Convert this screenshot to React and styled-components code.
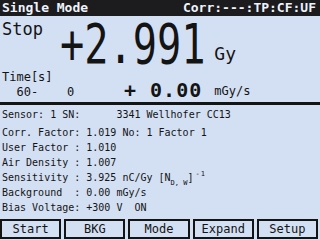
import styled, { createGlobalStyle } from "styled-components";

const GlobalStyle = createGlobalStyle`
  html, body {
    margin: 0;
    padding: 0;
    background: #d3dff2;
  }
  #root {
    width: 320px;
    height: 240px;
    overflow: hidden;
  }
`;

const Screen = styled.div`
  width: 320px;
  height: 240px;
  display: flex;
  flex-direction: column;
  background: #d3dff2;
  color: #141414;
  font-family: "DejaVu Sans Mono", "Liberation Mono", monospace;
`;

const TitleBar = styled.div`
  height: 16px;
  display: flex;
  justify-content: space-between;
  padding: 0 4px 0 2px;
  background: #1c1c1e;
  color: #eef2fa;
  font-size: 13px;
  font-weight: bold;
  line-height: 16px;
  white-space: pre;
`;

const Reading = styled.div`
  height: 86px;
  display: flex;
  flex-direction: column;
  border-bottom: 3px solid #141414;
`;

const DoseRow = styled.div`
  height: 52px;
  display: flex;
  align-items: flex-start;
`;

const Status = styled.div`
  width: 60px;
  padding: 5px 0 0 2px;
  box-sizing: border-box;
  font-size: 17px;
  line-height: 1;
`;

const BigValue = styled.span`
  display: inline-block;
  font-size: 56px;
  line-height: 1;
  transform: scaleX(0.72);
  transform-origin: left top;
  margin-right: -57px;
`;

const Unit = styled.span`
  font-size: ${(p) => p.$size || 12}px;
  line-height: 1;
  margin-top: ${(p) => p.$top || 0}px;
  margin-left: ${(p) => p.$left || 0}px;
`;

const RateRow = styled.div`
  display: flex;
  align-items: flex-start;
`;

const TimeBlock = styled.div`
  width: 124px;
  padding: 3px 0 0 2px;
  box-sizing: border-box;
  display: flex;
  flex-direction: column;
  gap: 3px;
  font-size: 12px;
  line-height: 1;
  white-space: pre;
`;

const RateValue = styled.span`
  margin-top: 12px;
  font-size: 20px;
  font-weight: bold;
  letter-spacing: 1px;
  line-height: 1;
  white-space: pre;
`;

const Info = styled.div`
  padding: 2px 0 0 2px;
  font-size: 10px;
  line-height: 15px;
  flex: 1;
  min-height: 0;
`;

const InfoRow = styled.div`
  height: 15px;
  white-space: pre;
  margin-bottom: ${(p) => (p.$gap ? 3 : 0)}px;
`;

const Small = styled.span`
  font-size: 7px;
  line-height: 0;
  vertical-align: ${(p) => p.$shift}px;
  letter-spacing: ${(p) => p.$spacing || 0}px;
  margin-left: ${(p) => p.$left || 0}px;
`;

const ButtonBar = styled.div`
  display: grid;
  grid-template-columns: repeat(5, 1fr);
  gap: 3px;
  padding: 0 2px 1px 0;
`;

const SoftKey = styled.button`
  height: 20px;
  margin: 0;
  padding: 0;
  border: 2px solid #141414;
  background: #d3dff2;
  color: #141414;
  font-family: "DejaVu Sans Mono", "Liberation Mono", monospace;
  font-size: 12px;
  line-height: 16px;
`;

const keys = ["Start", "BKG", "Mode", "Expand", "Setup"];

export default function App() {
  return (
    <>
      <GlobalStyle />
      <Screen>
        <TitleBar>
          <span>Single Mode</span>
          <span>Corr:---:TP:CF:UF</span>
        </TitleBar>
        <Reading>
          <DoseRow>
            <Status>Stop</Status>
            <BigValue>+2.991</BigValue>
            <Unit $size={18} $top={29} $left={9}>
              Gy
            </Unit>
          </DoseRow>
          <RateRow>
            <TimeBlock>
              <span>Time[s]</span>
              <span>{"  60-    0"}</span>
            </TimeBlock>
            <RateValue>+ 0.00</RateValue>
            <Unit $size={12} $top={17} $left={12}>
              mGy/s
            </Unit>
          </RateRow>
        </Reading>
        <Info>
          <InfoRow $gap>{"Sensor: 1 SN:      3341 Wellhofer CC13"}</InfoRow>
          <InfoRow>Corr. Factor: 1.019 No: 1 Factor 1</InfoRow>
          <InfoRow>User Factor : 1.010</InfoRow>
          <InfoRow>Air Density : 1.007</InfoRow>
          <InfoRow>
            {"Sensitivity : 3.925 nC/Gy [N"}
            <Small $shift={-4}>D, W</Small>
            {"]"}
            <Small $shift={5} $spacing={1} $left={2}>
              -1
            </Small>
          </InfoRow>
          <InfoRow>Background  : 0.00 mGy/s</InfoRow>
          <InfoRow>{"Bias Voltage: +300 V  ON"}</InfoRow>
        </Info>
        <ButtonBar>
          {keys.map((k) => (
            <SoftKey key={k}>{k}</SoftKey>
          ))}
        </ButtonBar>
      </Screen>
    </>
  );
}
